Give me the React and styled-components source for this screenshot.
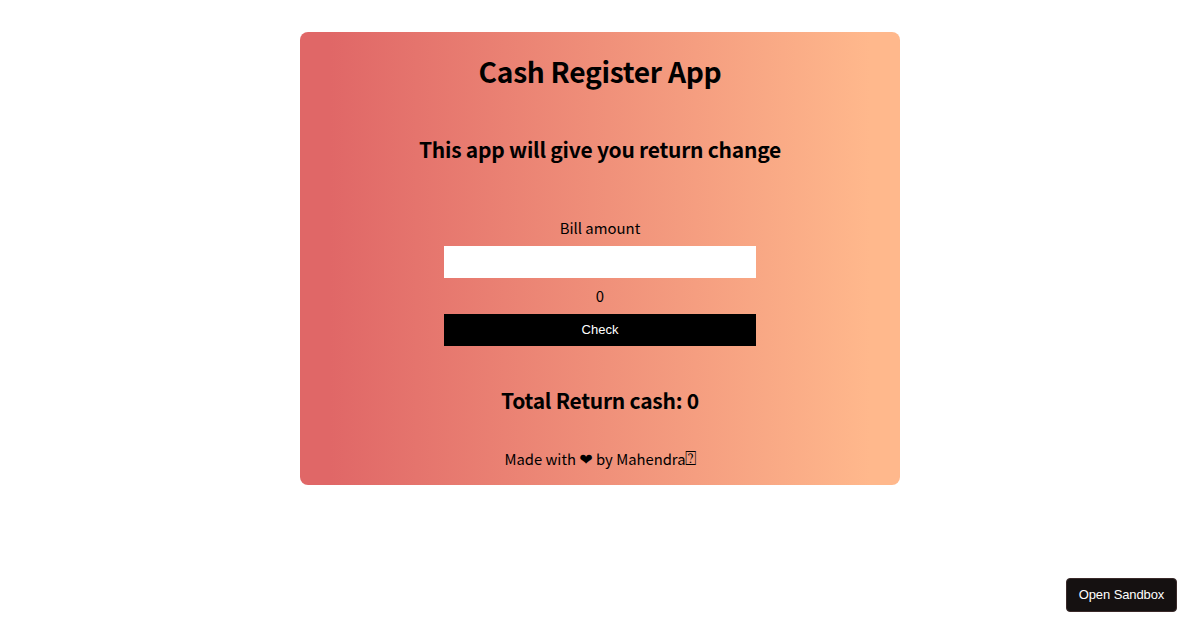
import React from "react";
import styled, { createGlobalStyle } from "styled-components";

const Global = createGlobalStyle`
  html, body { margin: 0; padding: 0; background: #fff; }
  body { font-family: "Noto Sans CJK SC", "Noto Sans CJK JP", sans-serif; overflow: hidden; height: 630px; }
`;
const Page = styled.div`
  height: 630px;
  padding-top: 32px;
  box-sizing: border-box;
  display: flex;
  flex-direction: column;
  align-items: center;
  position: relative;
`;
const Card = styled.main`
  width: 600px;
  height: 453px;
  border-radius: 8px;
  background: linear-gradient(90deg, #e06767 5%, #ffb88c 95%);
  display: flex;
  flex-direction: column;
  align-items: center;
  color: #000;
`;
const Title = styled.h1`
  margin: 15px 0 0;
  font-size: 28.2px;
  letter-spacing: -0.3px;
  line-height: 48px;
  font-weight: 700;
`;
const Subtitle = styled.h2`
  margin: 36px 0 0;
  font-size: 21px;
  letter-spacing: -0.25px;
  line-height: 36px;
  font-weight: 700;
`;
const Label = styled.label`
  margin-top: 49px;
  font-size: 14.9px;
  line-height: 24px;
`;
const Input = styled.input`
  width: 312px;
  height: 32px;
  margin-top: 6px;
  border: 0;
  padding: 0;
  background: #fff;
  display: block;
`;
const Value = styled.div`
  margin-top: 6px;
  font-size: 14.9px;
  line-height: 24px;
`;
const Check = styled.button`
  width: 312px;
  height: 32px;
  margin-top: 6px;
  border: 0;
  padding: 0 0 2px;
  background: #000;
  color: #fff;
  font: 13px "Liberation Sans", Arial, sans-serif;
`;
const Total = styled.h2`
  margin: 36px 0 0;
  font-size: 21px;
  letter-spacing: -0.25px;
  line-height: 36px;
  font-weight: 700;
`;
const Footer = styled.footer`
  margin-top: 29px;
  font-size: 14.8px;
  line-height: 24px;
`;
const Heart = styled.span`
  font-family: "DejaVu Sans", sans-serif;
  font-size: 16px;
`;
const Missing = styled.span`
  font-family: "DejaVu Sans", sans-serif;
  font-size: 19px;
  line-height: 1;
  margin-left: -1px;
`;
const Sandbox = styled.a`
  position: absolute;
  right: 23px;
  bottom: 18px;
  width: 111px;
  height: 34px;
  border-radius: 4px;
  background: #151111;
  color: #fff;
  font: 13px "Liberation Sans", Arial, sans-serif;
  letter-spacing: -0.1px;
  display: flex;
  align-items: center;
  justify-content: center;
  box-sizing: border-box;
  border: 1px solid #3a2a2a;
  padding-bottom: 2px;
`;

export default function App() {
  return (
    <>
      <Global />
      <Page>
        <Card>
          <Title>Cash Register App</Title>
          <Subtitle>This app will give you return change</Subtitle>
          <Label>Bill amount</Label>
          <Input type="text" />
          <Value>0</Value>
          <Check>Check</Check>
          <Total>Total Return cash: 0</Total>
          <Footer>Made with <Heart>{"\u2764\uFE0E"}</Heart> by Mahendra<Missing>{"\u2370"}</Missing></Footer>
        </Card>
        <Sandbox>Open Sandbox</Sandbox>
      </Page>
    </>
  );
}
